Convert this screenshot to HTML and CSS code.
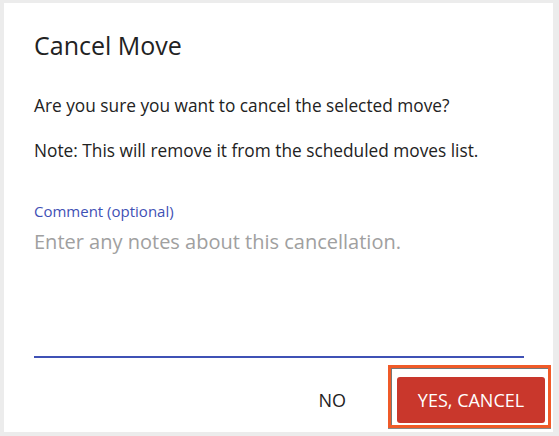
FILE: index.html
```
<!DOCTYPE html>
<html lang="en">
<head>
	<meta charset="UTF-8">
	<title>Cancel Move</title>
	<link rel="stylesheet" href="styles.css">
</head>
<body>
	<div class="dialog">
		<h2 class="title">Cancel Move</h2>
		<p class="text">Are you sure you want to cancel the selected move?</p>
		<p class="text">Note: This will remove it from the scheduled moves list.</p>
		<div class="field">
			<label class="label" for="comment">Comment (optional)</label>
			<textarea id="comment" class="input" placeholder="Enter any notes about this cancellation."></textarea>
		</div>
		<div class="actions">
			<button class="btn btn-no">NO</button>
			<div class="focus">
				<button class="btn btn-yes">YES, CANCEL</button>
			</div>
		</div>
	</div>
</body>
</html>
```

FILE: styles.css
```
* {
	box-sizing: border-box;
}
body {
	margin: 0;
	background-color: #ececec;
	font-family: "Open Sans", "Noto Sans", sans-serif;
	color: #222;
}
.dialog {
	display: flex;
	flex-direction: column;
	width: 549px;
	height: 429px;
	margin: 3px 0 0 4px;
	padding: 0 29px 0 30px;
	background-color: #fff;
}
.title {
	margin: 25px 0 0;
	font-size: 25px;
	font-weight: 400;
	line-height: 34px;
}
.text {
	margin: 0;
	font-size: 17.3px;
	line-height: 24px;
}
.title + .text {
	margin-top: 32px;
}
.text + .text {
	margin-top: 21px;
}
.field {
	display: flex;
	flex-direction: column;
	margin-top: 38px;
}
.label {
	font-size: 15px;
	line-height: 20px;
	color: #3f51b5;
}
.input {
	height: 137px;
	padding: 8px 0 0;
	border: 0;
	border-bottom: 2px solid #3f51b5;
	outline: none;
	resize: none;
	font: 20px/26px "Open Sans", "Noto Sans", sans-serif;
	color: #222;
}
.input::placeholder {
	color: #a0a0a0;
}
.actions {
	display: flex;
	align-items: flex-end;
	justify-content: flex-end;
	margin: 7px -27px 0 0;
}
.btn {
	border: 0;
	font-family: "Open Sans", "Noto Sans", sans-serif;
	font-size: 18px;
	cursor: pointer;
}
.btn-no {
	height: 46px;
	margin: 0 42px 5px 0;
	padding: 0;
	background: none;
	color: #222;
}
.focus {
	padding: 9px 3px 2px 6px;
	border: 3px solid #f05a28;
	box-shadow: inset 1px 1px 0 #777, 0 1px 0 #888;
}
.btn-yes {
	width: 148px;
	height: 46px;
	border-radius: 3px;
	background-color: #c9372c;
	color: #fff;
}
```
